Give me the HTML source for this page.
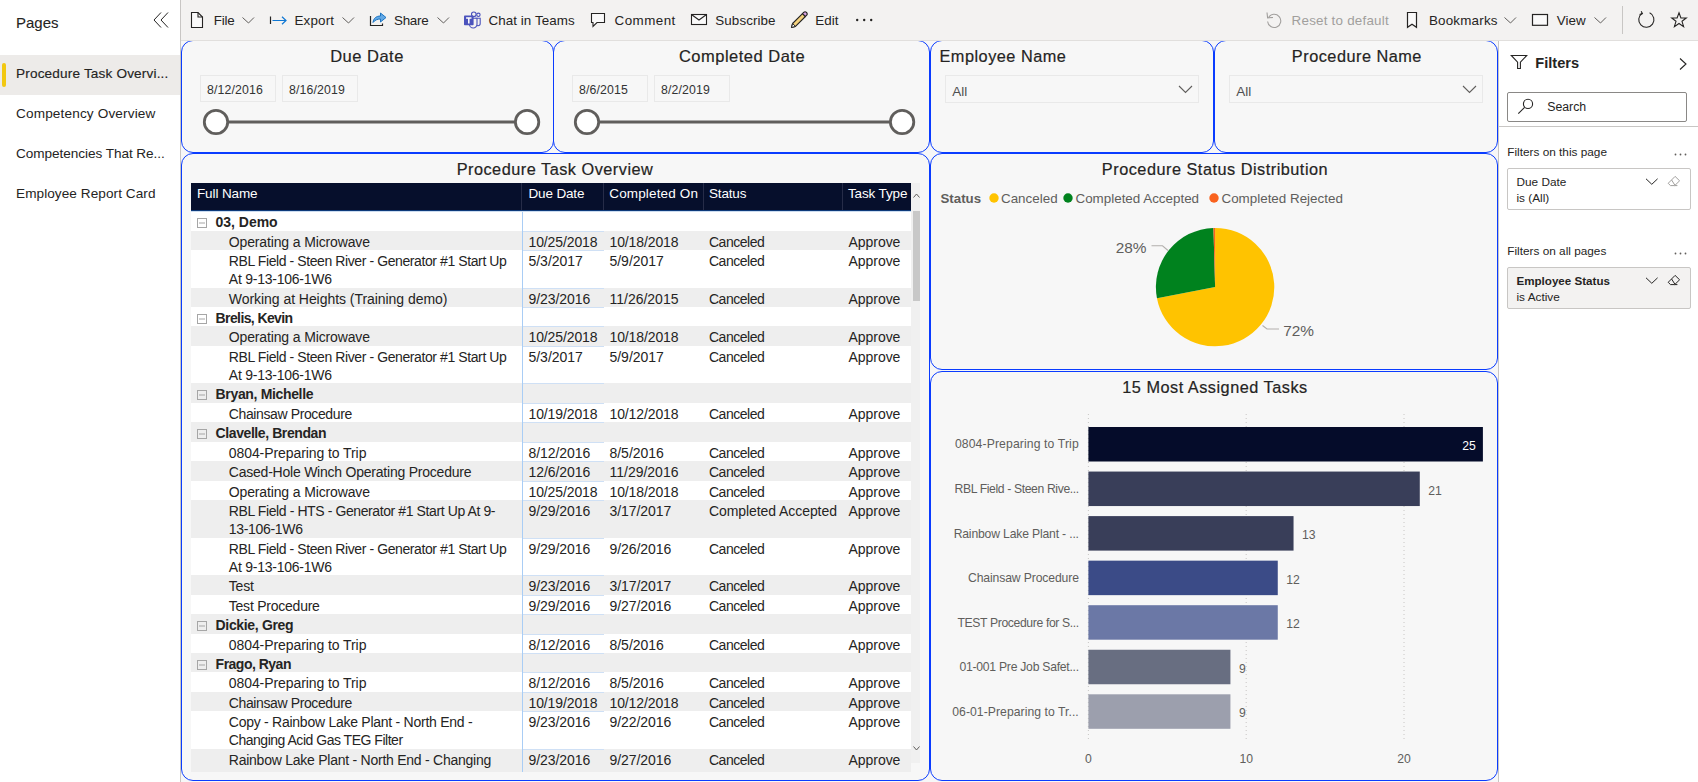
<!DOCTYPE html>
<html><head><meta charset="utf-8"><style>
html,body{margin:0;padding:0;width:1698px;height:782px;overflow:hidden;background:#f7f7f7;font-family:"Liberation Sans", sans-serif;}
.t{position:absolute;white-space:nowrap;line-height:1;}
.r{position:absolute;box-sizing:border-box;}
</style></head><body>
<div class="r" style="left:0px;top:0px;width:180px;height:782px;background:#fff"></div>
<div class="r" style="left:180px;top:0px;width:1px;height:782px;background:#c8c6c4"></div>
<div class="r" style="left:1498px;top:41px;width:200px;height:741px;background:#fff"></div>
<div class="r" style="left:1498px;top:41px;width:1px;height:741px;background:#c8c6c4"></div>
<div class="t " style="left:16px;top:15.00px;font-size:15px;color:#252423;font-weight:normal;-webkit-text-stroke:0.1px #252423">Pages</div>
<svg class="r" style="left:152px;top:11px;" width="18" height="18" viewBox="0 0 18 18"><path d="M9 1.5 L2 9 L9 16.5 M16 1.5 L9 9 L16 16.5" fill="none" stroke="#252423" stroke-width="1"/></svg>
<div class="r" style="left:0px;top:55px;width:180px;height:40px;background:#edebe9"></div>
<div class="r" style="left:2px;top:63px;width:4px;height:24px;background:#f2c811;border-radius:2px"></div>
<div class="t " style="left:16px;top:67.00px;font-size:13.6px;color:#252423;font-weight:normal;-webkit-text-stroke:0.15px #252423;letter-spacing:0.163px;">Procedure Task Overvi...</div>
<div class="t " style="left:16px;top:107.00px;font-size:13.6px;color:#252423;font-weight:normal;;letter-spacing:0.145px;">Competency Overview</div>
<div class="t " style="left:16px;top:147.00px;font-size:13.6px;color:#252423;font-weight:normal;;letter-spacing:-0.058px;">Competencies That Re...</div>
<div class="t " style="left:16px;top:187.00px;font-size:13.6px;color:#252423;font-weight:normal;;letter-spacing:0.063px;">Employee Report Card</div>
<div class="r" style="left:181px;top:40px;width:373px;height:113px;border:1px solid #0a3cff;border-radius:12px;background:#f7f7f7"></div>
<div class="r" style="left:553px;top:40px;width:377px;height:113px;border:1px solid #0a3cff;border-radius:12px;background:#f7f7f7"></div>
<div class="r" style="left:930px;top:40px;width:284px;height:113px;border:1px solid #0a3cff;border-radius:12px;background:#f7f7f7"></div>
<div class="r" style="left:1214px;top:40px;width:284px;height:113px;border:1px solid #0a3cff;border-radius:12px;background:#f7f7f7"></div>
<div class="r" style="left:181px;top:153px;width:749px;height:628px;border:1px solid #0a3cff;border-radius:12px;background:#f7f7f7"></div>
<div class="r" style="left:930px;top:153px;width:568px;height:217px;border:1px solid #0a3cff;border-radius:12px;background:#f7f7f7"></div>
<div class="r" style="left:930px;top:371px;width:568px;height:410px;border:1px solid #0a3cff;border-radius:12px;background:#f7f7f7"></div>
<div class="t " style="left:67px;width:600px;text-align:center;top:48.00px;font-size:16.5px;color:#252423;font-weight:normal;letter-spacing:0.5px;-webkit-text-stroke:0.2px #252423">Due Date</div>
<div class="r" style="left:200px;top:75px;width:76px;height:27px;border:1px solid #e9e9e9;background:#f7f7f7"></div>
<div class="t " style="left:207px;top:84.00px;font-size:12.3px;color:#333;font-weight:normal;letter-spacing:0.15px">8/12/2016</div>
<div class="r" style="left:282px;top:75px;width:76px;height:27px;border:1px solid #e9e9e9;background:#f7f7f7"></div>
<div class="t " style="left:289px;top:84.00px;font-size:12.3px;color:#333;font-weight:normal;letter-spacing:0.15px">8/16/2019</div>
<svg class="r" style="left:201.6px;top:108px;" width="339.1" height="28" viewBox="0 0 339.1 28"><line x1="14" y1="14" x2="325.1" y2="14" stroke="#605e5c" stroke-width="3"/><circle cx="14" cy="14" r="11.7" fill="#fff" stroke="#605e5c" stroke-width="2.8"/><circle cx="325.1" cy="14" r="11.7" fill="#fff" stroke="#605e5c" stroke-width="2.8"/></svg>
<div class="t " style="left:442px;width:600px;text-align:center;top:48.00px;font-size:16.5px;color:#252423;font-weight:normal;letter-spacing:0.5px;-webkit-text-stroke:0.2px #252423">Completed Date</div>
<div class="r" style="left:572px;top:75px;width:76px;height:27px;border:1px solid #e9e9e9;background:#f7f7f7"></div>
<div class="t " style="left:579px;top:84.00px;font-size:12.3px;color:#333;font-weight:normal;letter-spacing:0.15px">8/6/2015</div>
<div class="r" style="left:654px;top:75px;width:76px;height:27px;border:1px solid #e9e9e9;background:#f7f7f7"></div>
<div class="t " style="left:661px;top:84.00px;font-size:12.3px;color:#333;font-weight:normal;letter-spacing:0.15px">8/2/2019</div>
<svg class="r" style="left:573.4px;top:108px;" width="343.1" height="28" viewBox="0 0 343.1 28"><line x1="14" y1="14" x2="329.1" y2="14" stroke="#605e5c" stroke-width="3"/><circle cx="14" cy="14" r="11.7" fill="#fff" stroke="#605e5c" stroke-width="2.8"/><circle cx="329.1" cy="14" r="11.7" fill="#fff" stroke="#605e5c" stroke-width="2.8"/></svg>
<div class="r" style="left:181px;top:0px;width:1517px;height:40px;background:#f3f2f1"></div>
<div class="r" style="left:181px;top:40px;width:1517px;height:1px;background:#e1dfdd"></div>
<svg class="r" style="left:190px;top:11px;" width="15" height="18" viewBox="0 0 15 18"><path d="M1.5 1.5 H8 L12.5 6 V16.5 H1.5 Z" fill="#fafafa" stroke="#252423" stroke-width="1.1"/><path d="M8 1.5 V6 H12.5" fill="none" stroke="#252423" stroke-width="1.1"/></svg>
<div class="t " style="left:213.8px;top:14.00px;font-size:13.4px;color:#252423;font-weight:normal;;letter-spacing:-0.244px;">File</div>
<svg class="r" style="left:242px;top:16.5px;" width="13" height="7" viewBox="0 0 13 7"><path d="M0.5 0.5 L6.5 6 L12 0.5" fill="none" stroke="#605e5c" stroke-width="1"/></svg>
<svg class="r" style="left:269px;top:15px;" width="19" height="11" viewBox="0 0 19 11"><path d="M1.5 1.5 V9" stroke="#252423" stroke-width="1.2"/><path d="M3.5 5.5 H17 M13 1.8 L17 5.5 L13 9.2" fill="none" stroke="#0f78d4" stroke-width="1.2"/></svg>
<div class="t " style="left:294.5px;top:14.00px;font-size:13.4px;color:#252423;font-weight:normal;;letter-spacing:0.168px;">Export</div>
<svg class="r" style="left:341.5px;top:16.5px;" width="13" height="7" viewBox="0 0 13 7"><path d="M0.5 0.5 L6.5 6 L12 0.5" fill="none" stroke="#605e5c" stroke-width="1"/></svg>
<svg class="r" style="left:369px;top:11px;" width="19" height="17" viewBox="0 0 19 17"><path d="M1.5 5 V14.5 H13.5 V12.5" fill="none" stroke="#252423" stroke-width="1.2"/><path d="M4 11.5 C4.5 7 7.5 5 11.5 5 V2 L17 6.5 L11.5 11 V8 C8.5 8 6 9 4 11.5 Z" fill="#62a8e5" stroke="#0f6cbd" stroke-width="0.9" stroke-linejoin="round"/></svg>
<div class="t " style="left:394px;top:14.00px;font-size:13.4px;color:#252423;font-weight:normal;;letter-spacing:-0.287px;">Share</div>
<svg class="r" style="left:436.5px;top:16.5px;" width="13" height="7" viewBox="0 0 13 7"><path d="M0.5 0.5 L6.5 6 L12 0.5" fill="none" stroke="#605e5c" stroke-width="1"/></svg>
<svg class="r" style="left:463px;top:11px;" width="19" height="18" viewBox="0 0 19 18"><circle cx="15.4" cy="3.8" r="1.7" fill="#f3f2f1" stroke="#4b53bc" stroke-width="1.1"/><path d="M12.8 7.2 H17.2 V12.5 A2.2 2.2 0 0 1 12.8 12.5 Z" fill="#f3f2f1" stroke="#4b53bc" stroke-width="1.1"/><circle cx="10.8" cy="3.3" r="2.3" fill="#f3f2f1" stroke="#4b53bc" stroke-width="1.1"/><path d="M6.5 7.2 H14 V13.2 A3.75 3.75 0 0 1 6.5 13.2 Z" fill="#f3f2f1" stroke="#4b53bc" stroke-width="1.1"/><rect x="1" y="4.6" width="9.6" height="9.6" rx="0.8" fill="#4b53bc"/><path d="M3.1 7 H8.5 M5.8 7 V12.4" stroke="#fff" stroke-width="1.5"/></svg>
<div class="t " style="left:488.4px;top:14.00px;font-size:13.4px;color:#252423;font-weight:normal;;letter-spacing:0.082px;">Chat in Teams</div>
<svg class="r" style="left:590px;top:12px;" width="17" height="16" viewBox="0 0 17 16"><path d="M1.5 1.5 H14.5 V10.5 H7 L3 14.5 V10.5 H1.5 Z" fill="#fafafa" stroke="#252423" stroke-width="1.1" stroke-linejoin="miter"/></svg>
<div class="t " style="left:614.6px;top:14.00px;font-size:13.4px;color:#252423;font-weight:normal;;letter-spacing:0.432px;">Comment</div>
<svg class="r" style="left:690px;top:13px;" width="18" height="13" viewBox="0 0 18 13"><rect x="1.5" y="1.5" width="15" height="10" fill="#fafafa" stroke="#252423" stroke-width="1.1"/><path d="M1.8 1.8 L9 7 L16.2 1.8" fill="none" stroke="#252423" stroke-width="1.1"/></svg>
<div class="t " style="left:715.3px;top:14.00px;font-size:13.4px;color:#252423;font-weight:normal;;letter-spacing:0.090px;">Subscribe</div>
<svg class="r" style="left:790px;top:11px;" width="18" height="18" viewBox="0 0 18 18"><path d="M1.5 16.5 L2.6 12.5 L12.5 2.6 L15.4 5.5 L5.5 15.4 Z" fill="#f4d27d" stroke="#252423" stroke-width="1.1" stroke-linejoin="round"/><path d="M12.5 2.6 L13.6 1.5 A1.6 1.6 0 0 1 16.5 4.4 L15.4 5.5 Z" fill="#d7a0e0" stroke="#252423" stroke-width="1.1"/><path d="M1.5 16.5 L2.6 12.5 L5.5 15.4 Z" fill="#fff" stroke="#252423" stroke-width="1"/></svg>
<div class="t " style="left:815.3px;top:14.00px;font-size:13.4px;color:#252423;font-weight:normal;;letter-spacing:0.069px;">Edit</div>
<svg class="r" style="left:855px;top:18px;" width="19" height="4" viewBox="0 0 19 4"><circle cx="2.2" cy="2" r="1.2" fill="#252423"/><circle cx="9.2" cy="2" r="1.2" fill="#252423"/><circle cx="16.2" cy="2" r="1.2" fill="#252423"/></svg>
<svg class="r" style="left:1265px;top:11px;" width="18" height="18" viewBox="0 0 18 18"><path d="M3.5 6.5 A6.6 6.6 0 1 1 2.6 10.5" fill="none" stroke="#a19f9d" stroke-width="1.1"/><path d="M2 1.5 L2.6 6.8 L8 6.5" fill="none" stroke="#a19f9d" stroke-width="1.1"/></svg>
<div class="t " style="left:1291.6px;top:14.00px;font-size:13.4px;color:#a19f9d;font-weight:normal;;letter-spacing:0.217px;">Reset to default</div>
<svg class="r" style="left:1406px;top:11px;" width="12" height="18" viewBox="0 0 12 18"><path d="M1.5 1.5 H10.5 V16.3 L6 13.3 L1.5 16.3 Z" fill="#fafafa" stroke="#252423" stroke-width="1.2"/></svg>
<div class="t " style="left:1428.9px;top:14.00px;font-size:13.4px;color:#252423;font-weight:normal;;letter-spacing:0.206px;">Bookmarks</div>
<svg class="r" style="left:1503.5px;top:16.5px;" width="13" height="7" viewBox="0 0 13 7"><path d="M0.5 0.5 L6.5 6 L12 0.5" fill="none" stroke="#605e5c" stroke-width="1"/></svg>
<svg class="r" style="left:1531px;top:13px;" width="18" height="14" viewBox="0 0 18 14"><rect x="1.5" y="1.5" width="15" height="10.8" fill="#fafafa" stroke="#252423" stroke-width="1.2"/></svg>
<div class="t " style="left:1556.7px;top:14.00px;font-size:13.4px;color:#252423;font-weight:normal;;letter-spacing:0.086px;">View</div>
<svg class="r" style="left:1593.5px;top:16.5px;" width="13" height="7" viewBox="0 0 13 7"><path d="M0.5 0.5 L6.5 6 L12 0.5" fill="none" stroke="#605e5c" stroke-width="1"/></svg>
<div class="r" style="left:1622px;top:6px;width:1px;height:28px;background:#c8c6c4"></div>
<svg class="r" style="left:1637px;top:10px;" width="20" height="20" viewBox="0 0 20 20"><path d="M5.2 3.3 A7.6 7.6 0 1 0 12.6 2.8" fill="none" stroke="#252423" stroke-width="1.1"/><path d="M4.2 1.2 L5.4 3.6 L2.6 4.6" fill="none" stroke="#252423" stroke-width="1.1"/></svg>
<svg class="r" style="left:1670px;top:11px;" width="18" height="18" viewBox="0 0 18 18"><path d="M9 1.8 L10.9 6.9 L16.3 7 L12 10.3 L13.6 15.6 L9 12.5 L4.4 15.6 L6 10.3 L1.7 7 L7.1 6.9 Z" fill="none" stroke="#252423" stroke-width="1.1" stroke-linejoin="miter"/></svg>
<svg class="r" style="left:1510px;top:54px;" width="19" height="16" viewBox="0 0 19 16"><path d="M1.3 1.5 H16.7 L10.4 8.2 V14.5 H7.6 V8.2 Z" fill="none" stroke="#252423" stroke-width="1.1" stroke-linejoin="miter"/></svg>
<div class="t " style="left:1535.3px;top:56.00px;font-size:14.6px;color:#252423;font-weight:bold;">Filters</div>
<svg class="r" style="left:1678px;top:57px;" width="10" height="14" viewBox="0 0 10 14"><path d="M2 1.5 L8 7 L2 12.5" fill="none" stroke="#252423" stroke-width="1.1"/></svg>
<div class="r" style="left:1507px;top:92px;width:180px;height:30px;border:1px solid #8a8886;border-radius:2px;background:#fff"></div>
<svg class="r" style="left:1516px;top:97px;" width="20" height="19" viewBox="0 0 20 19"><circle cx="12" cy="6.9" r="4.6" fill="none" stroke="#252423" stroke-width="1.1"/><path d="M8.6 10.3 L2.3 16.6" stroke="#252423" stroke-width="1.1"/></svg>
<div class="t " style="left:1547.2px;top:101.00px;font-size:12.3px;color:#252423;font-weight:normal;">Search</div>
<div class="r" style="left:1499px;top:126px;width:199px;height:1px;background:#c8c6c4"></div>
<div class="t " style="left:1507.3px;top:147.00px;font-size:11.8px;color:#252423;font-weight:normal;">Filters on this page</div>
<svg class="r" style="left:1674px;top:152.5px;" width="14" height="3" viewBox="0 0 14 3"><circle cx="1.5" cy="1.5" r="0.9" fill="#605e5c"/><circle cx="6.5" cy="1.5" r="0.9" fill="#605e5c"/><circle cx="11.5" cy="1.5" r="0.9" fill="#605e5c"/></svg>
<div class="r" style="left:1507px;top:168px;width:184px;height:42px;border:1px solid #c8c6c4;border-radius:2px;background:#fff"></div>
<div class="t " style="left:1516.5px;top:177.00px;font-size:11.8px;color:#252423;font-weight:normal;">Due Date</div>
<div class="t " style="left:1516.5px;top:193.00px;font-size:11.8px;color:#252423;font-weight:normal;">is (All)</div>
<svg class="r" style="left:1645px;top:178px;" width="14" height="8" viewBox="0 0 14 8"><path d="M1 0.8 L6.8 6.3 L12.6 0.8" fill="none" stroke="#252423" stroke-width="1"/></svg>
<svg class="r" style="left:1666px;top:174px;" width="16" height="14" viewBox="0 0 16 14"><path d="M2.2 9.3 L9.1 2.4 L13.6 6.8 L8.7 11.6 H4.5 Z M5.6 6 L8.9 11.2 M8.7 11.6 H11.4" fill="none" stroke="#a19f9d" stroke-width="1" stroke-linejoin="round"/></svg>
<div class="t " style="left:1507.3px;top:246.00px;font-size:11.8px;color:#252423;font-weight:normal;">Filters on all pages</div>
<svg class="r" style="left:1674px;top:251.5px;" width="14" height="3" viewBox="0 0 14 3"><circle cx="1.5" cy="1.5" r="0.9" fill="#605e5c"/><circle cx="6.5" cy="1.5" r="0.9" fill="#605e5c"/><circle cx="11.5" cy="1.5" r="0.9" fill="#605e5c"/></svg>
<div class="r" style="left:1507px;top:267px;width:184px;height:42px;border:1px solid #c8c6c4;border-radius:2px;background:#f3f2f1"></div>
<div class="t " style="left:1516.5px;top:275.00px;font-size:11.6px;color:#252423;font-weight:bold;">Employee Status</div>
<div class="t " style="left:1516.5px;top:292.00px;font-size:11.8px;color:#252423;font-weight:normal;">is Active</div>
<svg class="r" style="left:1645px;top:277px;" width="14" height="8" viewBox="0 0 14 8"><path d="M1 0.8 L6.8 6.3 L12.6 0.8" fill="none" stroke="#252423" stroke-width="1"/></svg>
<svg class="r" style="left:1666px;top:273px;" width="16" height="14" viewBox="0 0 16 14"><path d="M2.2 9.3 L9.1 2.4 L13.6 6.8 L8.7 11.6 H4.5 Z M5.6 6 L8.9 11.2 M8.7 11.6 H11.4" fill="none" stroke="#252423" stroke-width="1" stroke-linejoin="round"/></svg>
<div class="t " style="left:939.5px;top:48.00px;font-size:16.3px;color:#252423;font-weight:normal;letter-spacing:0.5px;-webkit-text-stroke:0.2px #252423">Employee Name</div>
<div class="r" style="left:945px;top:75px;width:254px;height:28px;border:1px solid #e9e9e9;background:#f7f7f7"></div>
<div class="t " style="left:952.3px;top:85.00px;font-size:13.5px;color:#505050;font-weight:normal;">All</div>
<svg class="r" style="left:1178px;top:85px;" width="15" height="9" viewBox="0 0 15 9"><path d="M1 1 L7.5 7.5 L14 1" fill="none" stroke="#605e5c" stroke-width="1.1"/></svg>
<div class="t " style="left:1056.9px;width:600px;text-align:center;top:48.00px;font-size:16.3px;color:#252423;font-weight:normal;letter-spacing:0.5px;-webkit-text-stroke:0.2px #252423">Procedure Name</div>
<div class="r" style="left:1229px;top:75px;width:254px;height:28px;border:1px solid #e9e9e9;background:#f7f7f7"></div>
<div class="t " style="left:1236.3px;top:85.00px;font-size:13.5px;color:#505050;font-weight:normal;">All</div>
<svg class="r" style="left:1462px;top:85px;" width="15" height="9" viewBox="0 0 15 9"><path d="M1 1 L7.5 7.5 L14 1" fill="none" stroke="#605e5c" stroke-width="1.1"/></svg>
<div class="t " style="left:255px;width:600px;text-align:center;top:161.00px;font-size:16.3px;color:#252423;font-weight:normal;letter-spacing:0.5px;-webkit-text-stroke:0.2px #252423">Procedure Task Overview</div>
<div class="r" style="left:191px;top:183px;width:720px;height:27px;background:#060f2c"></div>
<div class="r" style="left:521px;top:183px;width:1px;height:27px;background:#262c48"></div>
<div class="r" style="left:603px;top:183px;width:1px;height:27px;background:#262c48"></div>
<div class="r" style="left:703px;top:183px;width:1px;height:27px;background:#262c48"></div>
<div class="r" style="left:842px;top:183px;width:1px;height:27px;background:#262c48"></div>
<div class="r" style="left:191px;top:210px;width:720px;height:1px;background:#0d3a7a"></div>
<div class="t " style="left:197px;top:187.00px;font-size:13.5px;color:#ffffff;font-weight:normal;;letter-spacing:-0.122px;">Full Name</div>
<div class="t " style="left:528.5px;top:187.00px;font-size:13.5px;color:#ffffff;font-weight:normal;;letter-spacing:-0.153px;">Due Date</div>
<div class="t " style="left:609.3px;top:187.00px;font-size:13.5px;color:#ffffff;font-weight:normal;;letter-spacing:0.141px;">Completed On</div>
<div class="t " style="left:709px;top:187.00px;font-size:13.5px;color:#ffffff;font-weight:normal;;letter-spacing:-0.164px;">Status</div>
<div class="t " style="left:848px;top:187.00px;font-size:13.5px;color:#ffffff;font-weight:normal;;letter-spacing:-0.138px;">Task Type</div>
<div class="r" style="left:191px;top:211px;width:720px;height:561px;overflow:hidden">
<div class="r" style="left:0px;top:0px;width:720px;height:20px;background:#ffffff"></div>
<svg class="r" style="left:6px;top:7px" width="10" height="10"><rect x="0.5" y="0.5" width="9" height="9" fill="none" stroke="#a6a6a6" stroke-width="1"/><path d="M2 5 H8" stroke="#a6a6a6" stroke-width="1"/></svg>
<div class="t " style="left:24.599999999999994px;top:4.00px;font-size:14px;color:#252423;font-weight:bold;;letter-spacing:-0.036px;">03, Demo</div>
<div class="r" style="left:0px;top:20px;width:720px;height:19px;background:#eeeeee"></div>
<div class="t " style="left:37.80000000000001px;top:24.00px;font-size:14px;color:#252423;font-weight:normal;;letter-spacing:-0.141px;">Operating a Microwave</div>
<div class="t " style="left:337.5px;top:24.00px;font-size:14px;color:#252423;font-weight:normal;;letter-spacing:-0.115px;">10/25/2018</div>
<div class="t " style="left:418.5px;top:24.00px;font-size:14px;color:#252423;font-weight:normal;;letter-spacing:-0.115px;">10/18/2018</div>
<div class="t " style="left:518px;top:24.00px;font-size:14px;color:#252423;font-weight:normal;;letter-spacing:-0.488px;">Canceled</div>
<div class="t " style="left:657.5px;top:24.00px;font-size:14px;color:#252423;font-weight:normal;;letter-spacing:-0.042px;">Approve</div>
<div class="r" style="left:0px;top:39px;width:720px;height:38px;background:#ffffff"></div>
<div class="t " style="left:37.80000000000001px;top:43.00px;font-size:14px;color:#252423;font-weight:normal;;letter-spacing:-0.406px;">RBL Field - Steen River - Generator #1 Start Up</div>
<div class="t " style="left:37.80000000000001px;top:61.00px;font-size:14px;color:#252423;font-weight:normal;;letter-spacing:-0.238px;">At 9-13-106-1W6</div>
<div class="t " style="left:337.5px;top:43.00px;font-size:14px;color:#252423;font-weight:normal;;letter-spacing:-0.027px;">5/3/2017</div>
<div class="t " style="left:418.5px;top:43.00px;font-size:14px;color:#252423;font-weight:normal;;letter-spacing:-0.027px;">5/9/2017</div>
<div class="t " style="left:518px;top:43.00px;font-size:14px;color:#252423;font-weight:normal;;letter-spacing:-0.488px;">Canceled</div>
<div class="t " style="left:657.5px;top:43.00px;font-size:14px;color:#252423;font-weight:normal;;letter-spacing:-0.042px;">Approve</div>
<div class="r" style="left:0px;top:77px;width:720px;height:19px;background:#eeeeee"></div>
<div class="t " style="left:37.80000000000001px;top:81.00px;font-size:14px;color:#252423;font-weight:normal;;letter-spacing:-0.048px;">Working at Heights (Training demo)</div>
<div class="t " style="left:337.5px;top:81.00px;font-size:14px;color:#252423;font-weight:normal;;letter-spacing:-0.076px;">9/23/2016</div>
<div class="t " style="left:418.5px;top:81.00px;font-size:14px;color:#252423;font-weight:normal;;letter-spacing:-0.010px;">11/26/2015</div>
<div class="t " style="left:518px;top:81.00px;font-size:14px;color:#252423;font-weight:normal;;letter-spacing:-0.488px;">Canceled</div>
<div class="t " style="left:657.5px;top:81.00px;font-size:14px;color:#252423;font-weight:normal;;letter-spacing:-0.042px;">Approve</div>
<div class="r" style="left:0px;top:96px;width:720px;height:19px;background:#ffffff"></div>
<svg class="r" style="left:6px;top:103px" width="10" height="10"><rect x="0.5" y="0.5" width="9" height="9" fill="none" stroke="#a6a6a6" stroke-width="1"/><path d="M2 5 H8" stroke="#a6a6a6" stroke-width="1"/></svg>
<div class="t " style="left:24.599999999999994px;top:100.00px;font-size:14px;color:#252423;font-weight:bold;;letter-spacing:-0.607px;">Brelis, Kevin</div>
<div class="r" style="left:0px;top:115px;width:720px;height:20px;background:#eeeeee"></div>
<div class="t " style="left:37.80000000000001px;top:119.00px;font-size:14px;color:#252423;font-weight:normal;;letter-spacing:-0.141px;">Operating a Microwave</div>
<div class="t " style="left:337.5px;top:119.00px;font-size:14px;color:#252423;font-weight:normal;;letter-spacing:-0.115px;">10/25/2018</div>
<div class="t " style="left:418.5px;top:119.00px;font-size:14px;color:#252423;font-weight:normal;;letter-spacing:-0.115px;">10/18/2018</div>
<div class="t " style="left:518px;top:119.00px;font-size:14px;color:#252423;font-weight:normal;;letter-spacing:-0.488px;">Canceled</div>
<div class="t " style="left:657.5px;top:119.00px;font-size:14px;color:#252423;font-weight:normal;;letter-spacing:-0.042px;">Approve</div>
<div class="r" style="left:0px;top:135px;width:720px;height:37px;background:#ffffff"></div>
<div class="t " style="left:37.80000000000001px;top:139.00px;font-size:14px;color:#252423;font-weight:normal;;letter-spacing:-0.406px;">RBL Field - Steen River - Generator #1 Start Up</div>
<div class="t " style="left:37.80000000000001px;top:157.00px;font-size:14px;color:#252423;font-weight:normal;;letter-spacing:-0.238px;">At 9-13-106-1W6</div>
<div class="t " style="left:337.5px;top:139.00px;font-size:14px;color:#252423;font-weight:normal;;letter-spacing:-0.027px;">5/3/2017</div>
<div class="t " style="left:418.5px;top:139.00px;font-size:14px;color:#252423;font-weight:normal;;letter-spacing:-0.027px;">5/9/2017</div>
<div class="t " style="left:518px;top:139.00px;font-size:14px;color:#252423;font-weight:normal;;letter-spacing:-0.488px;">Canceled</div>
<div class="t " style="left:657.5px;top:139.00px;font-size:14px;color:#252423;font-weight:normal;;letter-spacing:-0.042px;">Approve</div>
<div class="r" style="left:0px;top:172px;width:720px;height:20px;background:#eeeeee"></div>
<svg class="r" style="left:6px;top:179px" width="10" height="10"><rect x="0.5" y="0.5" width="9" height="9" fill="none" stroke="#a6a6a6" stroke-width="1"/><path d="M2 5 H8" stroke="#a6a6a6" stroke-width="1"/></svg>
<div class="t " style="left:24.599999999999994px;top:176.00px;font-size:14px;color:#252423;font-weight:bold;;letter-spacing:-0.344px;">Bryan, Michelle</div>
<div class="r" style="left:0px;top:192px;width:720px;height:19px;background:#ffffff"></div>
<div class="t " style="left:37.80000000000001px;top:196.00px;font-size:14px;color:#252423;font-weight:normal;;letter-spacing:-0.386px;">Chainsaw Procedure</div>
<div class="t " style="left:337.5px;top:196.00px;font-size:14px;color:#252423;font-weight:normal;;letter-spacing:-0.115px;">10/19/2018</div>
<div class="t " style="left:418.5px;top:196.00px;font-size:14px;color:#252423;font-weight:normal;;letter-spacing:-0.115px;">10/12/2018</div>
<div class="t " style="left:518px;top:196.00px;font-size:14px;color:#252423;font-weight:normal;;letter-spacing:-0.488px;">Canceled</div>
<div class="t " style="left:657.5px;top:196.00px;font-size:14px;color:#252423;font-weight:normal;;letter-spacing:-0.042px;">Approve</div>
<div class="r" style="left:0px;top:211px;width:720px;height:20px;background:#eeeeee"></div>
<svg class="r" style="left:6px;top:218px" width="10" height="10"><rect x="0.5" y="0.5" width="9" height="9" fill="none" stroke="#a6a6a6" stroke-width="1"/><path d="M2 5 H8" stroke="#a6a6a6" stroke-width="1"/></svg>
<div class="t " style="left:24.599999999999994px;top:215.00px;font-size:14px;color:#252423;font-weight:bold;;letter-spacing:-0.415px;">Clavelle, Brendan</div>
<div class="r" style="left:0px;top:231px;width:720px;height:19px;background:#ffffff"></div>
<div class="t " style="left:37.80000000000001px;top:235.00px;font-size:14px;color:#252423;font-weight:normal;;letter-spacing:-0.080px;">0804-Preparing to Trip</div>
<div class="t " style="left:337.5px;top:235.00px;font-size:14px;color:#252423;font-weight:normal;;letter-spacing:-0.076px;">8/12/2016</div>
<div class="t " style="left:418.5px;top:235.00px;font-size:14px;color:#252423;font-weight:normal;;letter-spacing:-0.027px;">8/5/2016</div>
<div class="t " style="left:518px;top:235.00px;font-size:14px;color:#252423;font-weight:normal;;letter-spacing:-0.488px;">Canceled</div>
<div class="t " style="left:657.5px;top:235.00px;font-size:14px;color:#252423;font-weight:normal;;letter-spacing:-0.042px;">Approve</div>
<div class="r" style="left:0px;top:250px;width:720px;height:20px;background:#eeeeee"></div>
<div class="t " style="left:37.80000000000001px;top:254.00px;font-size:14px;color:#252423;font-weight:normal;;letter-spacing:-0.225px;">Cased-Hole Winch Operating Procedure</div>
<div class="t " style="left:337.5px;top:254.00px;font-size:14px;color:#252423;font-weight:normal;;letter-spacing:-0.076px;">12/6/2016</div>
<div class="t " style="left:418.5px;top:254.00px;font-size:14px;color:#252423;font-weight:normal;;letter-spacing:-0.010px;">11/29/2016</div>
<div class="t " style="left:518px;top:254.00px;font-size:14px;color:#252423;font-weight:normal;;letter-spacing:-0.488px;">Canceled</div>
<div class="t " style="left:657.5px;top:254.00px;font-size:14px;color:#252423;font-weight:normal;;letter-spacing:-0.042px;">Approve</div>
<div class="r" style="left:0px;top:270px;width:720px;height:19px;background:#ffffff"></div>
<div class="t " style="left:37.80000000000001px;top:274.00px;font-size:14px;color:#252423;font-weight:normal;;letter-spacing:-0.141px;">Operating a Microwave</div>
<div class="t " style="left:337.5px;top:274.00px;font-size:14px;color:#252423;font-weight:normal;;letter-spacing:-0.115px;">10/25/2018</div>
<div class="t " style="left:418.5px;top:274.00px;font-size:14px;color:#252423;font-weight:normal;;letter-spacing:-0.115px;">10/18/2018</div>
<div class="t " style="left:518px;top:274.00px;font-size:14px;color:#252423;font-weight:normal;;letter-spacing:-0.488px;">Canceled</div>
<div class="t " style="left:657.5px;top:274.00px;font-size:14px;color:#252423;font-weight:normal;;letter-spacing:-0.042px;">Approve</div>
<div class="r" style="left:0px;top:289px;width:720px;height:38px;background:#eeeeee"></div>
<div class="t " style="left:37.80000000000001px;top:293.00px;font-size:14px;color:#252423;font-weight:normal;;letter-spacing:-0.400px;">RBL Field - HTS - Generator #1 Start Up At 9-</div>
<div class="t " style="left:37.80000000000001px;top:311.00px;font-size:14px;color:#252423;font-weight:normal;;letter-spacing:-0.323px;">13-106-1W6</div>
<div class="t " style="left:337.5px;top:293.00px;font-size:14px;color:#252423;font-weight:normal;;letter-spacing:-0.076px;">9/29/2016</div>
<div class="t " style="left:418.5px;top:293.00px;font-size:14px;color:#252423;font-weight:normal;;letter-spacing:-0.076px;">3/17/2017</div>
<div class="t " style="left:518px;top:293.00px;font-size:14px;color:#252423;font-weight:normal;;letter-spacing:-0.075px;">Completed Accepted</div>
<div class="t " style="left:657.5px;top:293.00px;font-size:14px;color:#252423;font-weight:normal;;letter-spacing:-0.042px;">Approve</div>
<div class="r" style="left:0px;top:327px;width:720px;height:37px;background:#ffffff"></div>
<div class="t " style="left:37.80000000000001px;top:331.00px;font-size:14px;color:#252423;font-weight:normal;;letter-spacing:-0.406px;">RBL Field - Steen River - Generator #1 Start Up</div>
<div class="t " style="left:37.80000000000001px;top:349.00px;font-size:14px;color:#252423;font-weight:normal;;letter-spacing:-0.238px;">At 9-13-106-1W6</div>
<div class="t " style="left:337.5px;top:331.00px;font-size:14px;color:#252423;font-weight:normal;;letter-spacing:-0.076px;">9/29/2016</div>
<div class="t " style="left:418.5px;top:331.00px;font-size:14px;color:#252423;font-weight:normal;;letter-spacing:-0.076px;">9/26/2016</div>
<div class="t " style="left:518px;top:331.00px;font-size:14px;color:#252423;font-weight:normal;;letter-spacing:-0.488px;">Canceled</div>
<div class="t " style="left:657.5px;top:331.00px;font-size:14px;color:#252423;font-weight:normal;;letter-spacing:-0.042px;">Approve</div>
<div class="r" style="left:0px;top:364px;width:720px;height:20px;background:#eeeeee"></div>
<div class="t " style="left:37.80000000000001px;top:368.00px;font-size:14px;color:#252423;font-weight:normal;;letter-spacing:-0.203px;">Test</div>
<div class="t " style="left:337.5px;top:368.00px;font-size:14px;color:#252423;font-weight:normal;;letter-spacing:-0.076px;">9/23/2016</div>
<div class="t " style="left:418.5px;top:368.00px;font-size:14px;color:#252423;font-weight:normal;;letter-spacing:-0.076px;">3/17/2017</div>
<div class="t " style="left:518px;top:368.00px;font-size:14px;color:#252423;font-weight:normal;;letter-spacing:-0.488px;">Canceled</div>
<div class="t " style="left:657.5px;top:368.00px;font-size:14px;color:#252423;font-weight:normal;;letter-spacing:-0.042px;">Approve</div>
<div class="r" style="left:0px;top:384px;width:720px;height:19px;background:#ffffff"></div>
<div class="t " style="left:37.80000000000001px;top:388.00px;font-size:14px;color:#252423;font-weight:normal;;letter-spacing:-0.235px;">Test Procedure</div>
<div class="t " style="left:337.5px;top:388.00px;font-size:14px;color:#252423;font-weight:normal;;letter-spacing:-0.076px;">9/29/2016</div>
<div class="t " style="left:418.5px;top:388.00px;font-size:14px;color:#252423;font-weight:normal;;letter-spacing:-0.076px;">9/27/2016</div>
<div class="t " style="left:518px;top:388.00px;font-size:14px;color:#252423;font-weight:normal;;letter-spacing:-0.488px;">Canceled</div>
<div class="t " style="left:657.5px;top:388.00px;font-size:14px;color:#252423;font-weight:normal;;letter-spacing:-0.042px;">Approve</div>
<div class="r" style="left:0px;top:403px;width:720px;height:20px;background:#eeeeee"></div>
<svg class="r" style="left:6px;top:410px" width="10" height="10"><rect x="0.5" y="0.5" width="9" height="9" fill="none" stroke="#a6a6a6" stroke-width="1"/><path d="M2 5 H8" stroke="#a6a6a6" stroke-width="1"/></svg>
<div class="t " style="left:24.599999999999994px;top:407.00px;font-size:14px;color:#252423;font-weight:bold;;letter-spacing:-0.338px;">Dickie, Greg</div>
<div class="r" style="left:0px;top:423px;width:720px;height:19px;background:#ffffff"></div>
<div class="t " style="left:37.80000000000001px;top:427.00px;font-size:14px;color:#252423;font-weight:normal;;letter-spacing:-0.080px;">0804-Preparing to Trip</div>
<div class="t " style="left:337.5px;top:427.00px;font-size:14px;color:#252423;font-weight:normal;;letter-spacing:-0.076px;">8/12/2016</div>
<div class="t " style="left:418.5px;top:427.00px;font-size:14px;color:#252423;font-weight:normal;;letter-spacing:-0.027px;">8/5/2016</div>
<div class="t " style="left:518px;top:427.00px;font-size:14px;color:#252423;font-weight:normal;;letter-spacing:-0.488px;">Canceled</div>
<div class="t " style="left:657.5px;top:427.00px;font-size:14px;color:#252423;font-weight:normal;;letter-spacing:-0.042px;">Approve</div>
<div class="r" style="left:0px;top:442px;width:720px;height:19px;background:#eeeeee"></div>
<svg class="r" style="left:6px;top:449px" width="10" height="10"><rect x="0.5" y="0.5" width="9" height="9" fill="none" stroke="#a6a6a6" stroke-width="1"/><path d="M2 5 H8" stroke="#a6a6a6" stroke-width="1"/></svg>
<div class="t " style="left:24.599999999999994px;top:446.00px;font-size:14px;color:#252423;font-weight:bold;;letter-spacing:-0.506px;">Frago, Ryan</div>
<div class="r" style="left:0px;top:461px;width:720px;height:20px;background:#ffffff"></div>
<div class="t " style="left:37.80000000000001px;top:465.00px;font-size:14px;color:#252423;font-weight:normal;;letter-spacing:-0.080px;">0804-Preparing to Trip</div>
<div class="t " style="left:337.5px;top:465.00px;font-size:14px;color:#252423;font-weight:normal;;letter-spacing:-0.076px;">8/12/2016</div>
<div class="t " style="left:418.5px;top:465.00px;font-size:14px;color:#252423;font-weight:normal;;letter-spacing:-0.027px;">8/5/2016</div>
<div class="t " style="left:518px;top:465.00px;font-size:14px;color:#252423;font-weight:normal;;letter-spacing:-0.488px;">Canceled</div>
<div class="t " style="left:657.5px;top:465.00px;font-size:14px;color:#252423;font-weight:normal;;letter-spacing:-0.042px;">Approve</div>
<div class="r" style="left:0px;top:481px;width:720px;height:19px;background:#eeeeee"></div>
<div class="t " style="left:37.80000000000001px;top:485.00px;font-size:14px;color:#252423;font-weight:normal;;letter-spacing:-0.386px;">Chainsaw Procedure</div>
<div class="t " style="left:337.5px;top:485.00px;font-size:14px;color:#252423;font-weight:normal;;letter-spacing:-0.115px;">10/19/2018</div>
<div class="t " style="left:418.5px;top:485.00px;font-size:14px;color:#252423;font-weight:normal;;letter-spacing:-0.115px;">10/12/2018</div>
<div class="t " style="left:518px;top:485.00px;font-size:14px;color:#252423;font-weight:normal;;letter-spacing:-0.488px;">Canceled</div>
<div class="t " style="left:657.5px;top:485.00px;font-size:14px;color:#252423;font-weight:normal;;letter-spacing:-0.042px;">Approve</div>
<div class="r" style="left:0px;top:500px;width:720px;height:38px;background:#ffffff"></div>
<div class="t " style="left:37.80000000000001px;top:504.00px;font-size:14px;color:#252423;font-weight:normal;;letter-spacing:-0.260px;">Copy - Rainbow Lake Plant - North End -</div>
<div class="t " style="left:37.80000000000001px;top:522.00px;font-size:14px;color:#252423;font-weight:normal;;letter-spacing:-0.482px;">Changing Acid Gas TEG Filter</div>
<div class="t " style="left:337.5px;top:504.00px;font-size:14px;color:#252423;font-weight:normal;;letter-spacing:-0.076px;">9/23/2016</div>
<div class="t " style="left:418.5px;top:504.00px;font-size:14px;color:#252423;font-weight:normal;;letter-spacing:-0.076px;">9/22/2016</div>
<div class="t " style="left:518px;top:504.00px;font-size:14px;color:#252423;font-weight:normal;;letter-spacing:-0.488px;">Canceled</div>
<div class="t " style="left:657.5px;top:504.00px;font-size:14px;color:#252423;font-weight:normal;;letter-spacing:-0.042px;">Approve</div>
<div class="r" style="left:0px;top:538px;width:720px;height:37px;background:#eeeeee"></div>
<div class="t " style="left:37.80000000000001px;top:542.00px;font-size:14px;color:#252423;font-weight:normal;;letter-spacing:-0.247px;">Rainbow Lake Plant - North End - Changing</div>
<div class="t " style="left:37.80000000000001px;top:560.00px;font-size:14px;color:#252423;font-weight:normal;;letter-spacing:-0.668px;">Acid Gas TEG Filter</div>
<div class="t " style="left:337.5px;top:542.00px;font-size:14px;color:#252423;font-weight:normal;;letter-spacing:-0.076px;">9/23/2016</div>
<div class="t " style="left:418.5px;top:542.00px;font-size:14px;color:#252423;font-weight:normal;;letter-spacing:-0.076px;">9/27/2016</div>
<div class="t " style="left:518px;top:542.00px;font-size:14px;color:#252423;font-weight:normal;;letter-spacing:-0.488px;">Canceled</div>
<div class="t " style="left:657.5px;top:542.00px;font-size:14px;color:#252423;font-weight:normal;;letter-spacing:-0.042px;">Approve</div>
<div class="r" style="left:331px;top:39px;width:82px;height:1px;background:#cfe0f5"></div>
<div class="r" style="left:331px;top:20px;width:82px;height:1px;background:#cfe0f5"></div>
<div class="r" style="left:331px;top:77px;width:82px;height:1px;background:#cfe0f5"></div>
<div class="r" style="left:331px;top:96px;width:82px;height:1px;background:#cfe0f5"></div>
<div class="r" style="left:331px;top:135px;width:82px;height:1px;background:#cfe0f5"></div>
<div class="r" style="left:331px;top:115px;width:82px;height:1px;background:#cfe0f5"></div>
<div class="r" style="left:331px;top:172px;width:82px;height:1px;background:#cfe0f5"></div>
<div class="r" style="left:331px;top:211px;width:82px;height:1px;background:#cfe0f5"></div>
<div class="r" style="left:331px;top:192px;width:82px;height:1px;background:#cfe0f5"></div>
<div class="r" style="left:331px;top:250px;width:82px;height:1px;background:#cfe0f5"></div>
<div class="r" style="left:331px;top:231px;width:82px;height:1px;background:#cfe0f5"></div>
<div class="r" style="left:331px;top:270px;width:82px;height:1px;background:#cfe0f5"></div>
<div class="r" style="left:331px;top:289px;width:82px;height:1px;background:#cfe0f5"></div>
<div class="r" style="left:331px;top:327px;width:82px;height:1px;background:#cfe0f5"></div>
<div class="r" style="left:331px;top:364px;width:82px;height:1px;background:#cfe0f5"></div>
<div class="r" style="left:331px;top:384px;width:82px;height:1px;background:#cfe0f5"></div>
<div class="r" style="left:331px;top:403px;width:82px;height:1px;background:#cfe0f5"></div>
<div class="r" style="left:331px;top:442px;width:82px;height:1px;background:#cfe0f5"></div>
<div class="r" style="left:331px;top:423px;width:82px;height:1px;background:#cfe0f5"></div>
<div class="r" style="left:331px;top:481px;width:82px;height:1px;background:#cfe0f5"></div>
<div class="r" style="left:331px;top:461px;width:82px;height:1px;background:#cfe0f5"></div>
<div class="r" style="left:331px;top:500px;width:82px;height:1px;background:#cfe0f5"></div>
<div class="r" style="left:331px;top:538px;width:82px;height:1px;background:#cfe0f5"></div>
<div class="r" style="left:331px;top:575px;width:82px;height:1px;background:#cfe0f5"></div>
<div class="r" style="left:331px;top:0px;width:1px;height:561px;background:#a9cdf5"></div>
</div>
<div class="r" style="left:191px;top:211px;width:720px;height:1px;background:#cbdcf0"></div>
<div class="r" style="left:911px;top:183px;width:9px;height:580px;background:#f0f0f0"></div>
<div class="r" style="left:913px;top:211px;width:7px;height:90px;background:#c8c8c8"></div>
<svg class="r" style="left:912px;top:192px;" width="9" height="7" viewBox="0 0 9 7"><path d="M1.5 5.5 L4.5 2 L7.5 5.5" fill="none" stroke="#605e5c" stroke-width="1"/></svg>
<svg class="r" style="left:912px;top:745px;" width="9" height="7" viewBox="0 0 9 7"><path d="M1.5 1.5 L4.5 5 L7.5 1.5" fill="none" stroke="#605e5c" stroke-width="1"/></svg>
<div class="t " style="left:915px;width:600px;text-align:center;top:161.00px;font-size:16.3px;color:#252423;font-weight:normal;letter-spacing:0.5px;-webkit-text-stroke:0.2px #252423">Procedure Status Distribution</div>
<div class="t " style="left:940.5px;top:192.00px;font-size:13.3px;color:#605e5c;font-weight:bold;">Status</div>
<svg class="r" style="left:988.5px;top:193px;" width="10" height="10" viewBox="0 0 10 10"><circle cx="5" cy="5" r="4.7" fill="#ffc300"/></svg>
<div class="t " style="left:1001px;top:192.00px;font-size:13.4px;color:#605e5c;font-weight:normal;">Canceled</div>
<svg class="r" style="left:1063px;top:193px;" width="10" height="10" viewBox="0 0 10 10"><circle cx="5" cy="5" r="4.7" fill="#00821e"/></svg>
<div class="t " style="left:1075.5px;top:192.00px;font-size:13.4px;color:#605e5c;font-weight:normal;">Completed Accepted</div>
<svg class="r" style="left:1209px;top:193px;" width="10" height="10" viewBox="0 0 10 10"><circle cx="5" cy="5" r="4.7" fill="#f9621e"/></svg>
<div class="t " style="left:1221.5px;top:192.00px;font-size:13.4px;color:#605e5c;font-weight:normal;">Completed Rejected</div>
<svg class="r" style="left:0;top:0" width="1698" height="782"><path d="M1215.1 287.1 L1215.10 227.90 A59.2 59.2 0 1 1 1156.95 298.19 Z" fill="#ffc300"/><path d="M1215.1 287.1 L1156.95 298.19 A59.2 59.2 0 0 1 1213.45 227.92 Z" fill="#00821e"/><path d="M1215.1 287.1 L1213.45 227.92 A59.2 59.2 0 0 1 1215.10 227.90 Z" fill="#f9621e"/><path d="M1151.5 245.8 H1162.5 L1168 250.5" fill="none" stroke="#b3b0ad" stroke-width="1.1"/><path d="M1262.5 325.5 L1267 329 H1279" fill="none" stroke="#b3b0ad" stroke-width="1.1"/></svg>
<div class="t " style="left:1115.7px;top:240.00px;font-size:15.4px;color:#605e5c;font-weight:normal;">28%</div>
<div class="t " style="left:1283.2px;top:323.00px;font-size:15.4px;color:#605e5c;font-weight:normal;">72%</div>
<div class="t " style="left:915px;width:600px;text-align:center;top:379.00px;font-size:16.3px;color:#252423;font-weight:normal;letter-spacing:0.5px;-webkit-text-stroke:0.2px #252423">15 Most Assigned Tasks</div>
<svg class="r" style="left:0;top:0" width="1698" height="782"><line x1="1088.4" y1="414" x2="1088.4" y2="742" stroke="#c8c6c4" stroke-width="1" stroke-dasharray="1 3"/><line x1="1246.2" y1="414" x2="1246.2" y2="742" stroke="#c8c6c4" stroke-width="1" stroke-dasharray="1 3"/><line x1="1404.0" y1="414" x2="1404.0" y2="742" stroke="#c8c6c4" stroke-width="1" stroke-dasharray="1 3"/><rect x="1088.4" y="427.00" width="394.50" height="34.5" fill="#050c2a"/><rect x="1088.4" y="471.55" width="331.38" height="34.5" fill="#393e59"/><rect x="1088.4" y="516.10" width="205.14" height="34.5" fill="#393e59"/><rect x="1088.4" y="560.65" width="189.36" height="34.5" fill="#3b4b87"/><rect x="1088.4" y="605.20" width="189.36" height="34.5" fill="#6b78a6"/><rect x="1088.4" y="649.75" width="142.02" height="34.5" fill="#686e81"/><rect x="1088.4" y="694.30" width="142.02" height="34.5" fill="#9c9fad"/></svg>
<div class="t " style="right:619.2px;top:438.00px;font-size:12.2px;color:#605e5c;font-weight:normal;;letter-spacing:0.120px;">0804-Preparing to Trip</div>
<div class="t " style="right:222.0999999999999px;top:440.00px;font-size:12.2px;color:#ffffff;font-weight:normal;">25</div>
<div class="t " style="right:619.2px;top:483.00px;font-size:12.2px;color:#605e5c;font-weight:normal;;letter-spacing:-0.376px;">RBL Field - Steen Rive...</div>
<div class="t " style="left:1428.2800000000002px;top:485.00px;font-size:12.2px;color:#605e5c;font-weight:normal;">21</div>
<div class="t " style="right:619.2px;top:528.00px;font-size:12.2px;color:#605e5c;font-weight:normal;;letter-spacing:-0.176px;">Rainbow Lake Plant - ...</div>
<div class="t " style="left:1302.04px;top:529.00px;font-size:12.2px;color:#605e5c;font-weight:normal;">13</div>
<div class="t " style="right:619.2px;top:572.00px;font-size:12.2px;color:#605e5c;font-weight:normal;;letter-spacing:-0.129px;">Chainsaw Procedure</div>
<div class="t " style="left:1286.26px;top:574.00px;font-size:12.2px;color:#605e5c;font-weight:normal;">12</div>
<div class="t " style="right:619.2px;top:617.00px;font-size:12.2px;color:#605e5c;font-weight:normal;;letter-spacing:-0.372px;">TEST Procedure for S...</div>
<div class="t " style="left:1286.26px;top:618.00px;font-size:12.2px;color:#605e5c;font-weight:normal;">12</div>
<div class="t " style="right:619.2px;top:661.00px;font-size:12.2px;color:#605e5c;font-weight:normal;;letter-spacing:-0.262px;">01-001 Pre Job Safet...</div>
<div class="t " style="left:1238.92px;top:663.00px;font-size:12.2px;color:#605e5c;font-weight:normal;">9</div>
<div class="t " style="right:619.2px;top:706.00px;font-size:12.2px;color:#605e5c;font-weight:normal;;letter-spacing:0.052px;">06-01-Preparing to Tr...</div>
<div class="t " style="left:1238.92px;top:707.00px;font-size:12.2px;color:#605e5c;font-weight:normal;">9</div>
<div class="t " style="left:788.4000000000001px;width:600px;text-align:center;top:753.00px;font-size:12.2px;color:#605e5c;font-weight:normal;">0</div>
<div class="t " style="left:946.2px;width:600px;text-align:center;top:753.00px;font-size:12.2px;color:#605e5c;font-weight:normal;">10</div>
<div class="t " style="left:1104.0px;width:600px;text-align:center;top:753.00px;font-size:12.2px;color:#605e5c;font-weight:normal;">20</div>
</body></html>
